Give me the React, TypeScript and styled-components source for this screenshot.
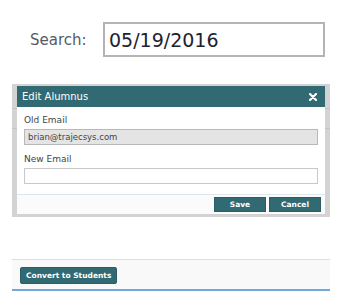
import styled, { createGlobalStyle } from "styled-components";

const GlobalStyle = createGlobalStyle`
  html, body {
    margin: 0;
    padding: 0;
    background: #ffffff;
  }
  body {
    font-family: "DejaVu Sans", Verdana, sans-serif;
  }
`;

const Page = styled.div`
  width: 353px;
  height: 299px;
  overflow: hidden;
  display: flex;
  flex-direction: column;
`;

const SearchRow = styled.div`
  display: flex;
  align-items: center;
  padding: 22px 0 0 30px;
  height: 35px;
`;

const SearchLabel = styled.label`
  width: 73px;
  font-size: 15px;
  color: #555a64;
`;

const SearchInput = styled.input`
  box-sizing: border-box;
  width: 222px;
  height: 35px;
  border: 2px solid #b4b4b4;
  padding: 0 4px;
  font-family: "DejaVu Sans", Verdana, sans-serif;
  font-size: 19px;
  color: #1c2230;
  outline: none;
`;

const Overlay = styled.div`
  position: relative;
  margin: 27px 0 0 12px;
  width: 318px;
  background: #d3d3d3;
  padding: 2px 5px 3px 5px;
  box-sizing: border-box;
`;

const GhostLine = styled.div<{ $top: number }>`
  position: absolute;
  left: 0;
  right: 0;
  top: ${(p) => p.$top}px;
  height: 1px;
  background: #c4c4c4;
`;

const Dialog = styled.div`
  position: relative;
  background: #ffffff;
  display: flex;
  flex-direction: column;
`;

const Header = styled.div`
  height: 21px;
  background: #316a72;
  display: flex;
  align-items: center;
  justify-content: space-between;
  padding: 0 8px 0 5px;
  color: #ffffff;
  font-size: 10px;
`;

const CloseButton = styled.button`
  background: transparent;
  border: 0;
  padding: 0;
  display: flex;
  cursor: pointer;
`;

const Body = styled.div`
  display: flex;
  flex-direction: column;
  padding: 7px 7px 10px 7px;
`;

const FieldLabel = styled.div`
  font-size: 9px;
  color: #444444;
  margin-bottom: 3px;
  line-height: 12px;
`;

const FieldInput = styled.input<{ $readOnly?: boolean }>`
  box-sizing: border-box;
  width: 100%;
  height: 16px;
  border: 1px solid ${(p) => (p.$readOnly ? "#b8b8b8" : "#c8c8c8")};
  background: ${(p) => (p.$readOnly ? "#e4e4e4" : "#ffffff")};
  font-family: "DejaVu Sans", Verdana, sans-serif;
  font-size: 8.5px;
  color: #444444;
  padding: 0 3px;
  margin-bottom: 8px;
  outline: none;
  &:last-child {
    margin-bottom: 0;
  }
`;

const Footer = styled.div`
  border-top: 1px solid #dde6ea;
  background: #fbfbfb;
  display: flex;
  justify-content: flex-end;
  gap: 3px;
  padding: 2px 4px 2px 0;
`;

const TealButton = styled.button<{ $width?: number }>`
  background: #316a72;
  color: #ffffff;
  border: 1px solid #2a5d64;
  font-family: "DejaVu Sans", Verdana, sans-serif;
  font-weight: bold;
  font-size: 7.5px;
  height: 15px;
  width: ${(p) => (p.$width ? `${p.$width}px` : "auto")};
  padding: 0 6px;
  cursor: pointer;
`;

const Toolbar = styled.div`
  margin: 42px 0 0 12px;
  width: 318px;
  box-sizing: border-box;
  border-top: 1px solid #dddddd;
  border-bottom: 2px solid #72a8dc;
  background: #f9f9f9;
  padding: 7px 8px 5px 8px;
  display: flex;
`;

const ConvertButton = styled(TealButton)`
  height: 17px;
  font-size: 7.5px;
  border-radius: 2px;
  padding: 0 5px;
`;

export default function App() {
  return (
    <Page>
      <GlobalStyle />
      <SearchRow>
        <SearchLabel>Search:</SearchLabel>
        <SearchInput defaultValue="05/19/2016" />
      </SearchRow>
      <Overlay>
        <GhostLine $top={24} />
        <GhostLine $top={44} />
        <Dialog>
          <Header>
            <span>Edit Alumnus</span>
            <CloseButton aria-label="Close">
              <svg width="8" height="8" viewBox="0 0 8 8">
                <path
                  d="M1 1 L7 7 M7 1 L1 7"
                  stroke="#ffffff"
                  strokeWidth="2.2"
                  strokeLinecap="round"
                />
              </svg>
            </CloseButton>
          </Header>
          <Body>
            <FieldLabel>Old Email</FieldLabel>
            <FieldInput $readOnly readOnly defaultValue="brian@trajecsys.com" />
            <FieldLabel>New Email</FieldLabel>
            <FieldInput />
          </Body>
          <Footer>
            <TealButton $width={52}>Save</TealButton>
            <TealButton $width={52}>Cancel</TealButton>
          </Footer>
        </Dialog>
      </Overlay>
      <Toolbar>
        <ConvertButton>Convert to Students</ConvertButton>
      </Toolbar>
    </Page>
  );
}
